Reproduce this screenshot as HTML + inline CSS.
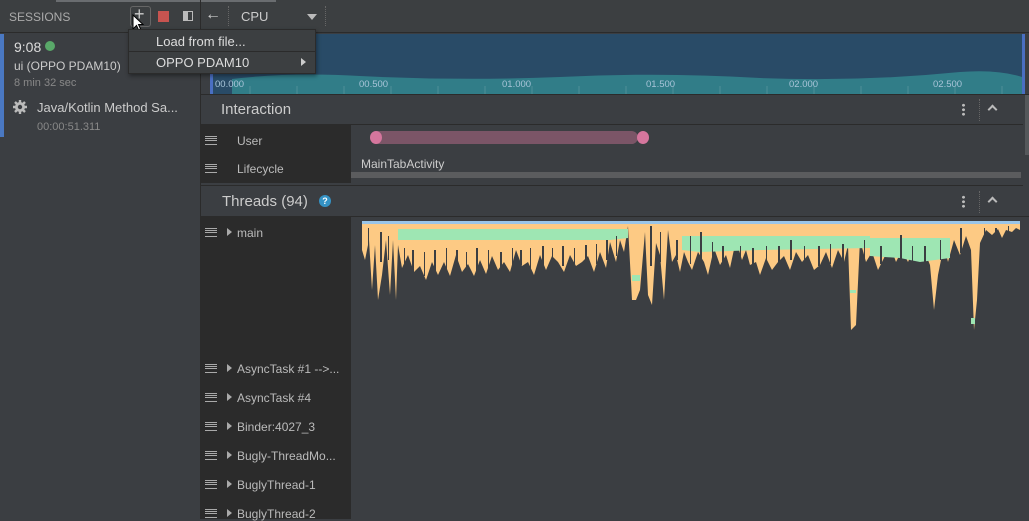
<!DOCTYPE html>
<html><head><meta charset="utf-8"><style>
*{margin:0;padding:0;box-sizing:border-box}
body{width:1029px;height:519px;overflow:hidden;background:#3b3e42;font-family:"Liberation Sans",sans-serif;color:#bbb;position:relative;font-size:12px}
.a{position:absolute}
.ham{position:absolute;width:12px;height:9px;border-top:1px solid #aaa;border-bottom:1px solid #aaa}
.ham:after{content:"";position:absolute;left:0;right:0;top:3px;height:1px;background:#aaa;box-shadow:0 -2px 0 #aaa}
.tri{position:absolute;width:0;height:0;border-left:5px solid #aaa;border-top:4px solid transparent;border-bottom:4px solid transparent}
.lbl{position:absolute;left:237px;font-size:12px;color:#bbb}
.tl{position:absolute;top:79px;font-size:9.5px;color:#a8c4d8}
</style></head><body>
<div class="a" style="left:0;top:0;width:1029px;height:33px;background:#3c3f41;border-bottom:1px solid #2b2b2b"></div>
<div class="a" style="left:56px;top:0;width:220px;height:2px;background:#6a6d70"></div>
<div class="a" style="left:9px;top:10px;font-size:12px;color:#aaa">SESSIONS</div>
<div class="a" style="left:130px;top:6px;width:21px;height:21px;border:1px solid #666;border-radius:3px"></div>
<div class="a" style="left:134px;top:4px;font-size:18px;color:#ccc">+</div>
<div class="a" style="left:158px;top:11px;width:11px;height:11px;background:#c75450"></div>
<div class="a" style="left:183px;top:11px;width:10px;height:10px;border:1px solid #bbb;background:linear-gradient(90deg,#bbb 50%,transparent 50%)"></div>
<svg class="a" style="left:132px;top:14px" width="14" height="20"><path d="M1 1 L1 15 L4.5 11.5 L7 17 L9 16 L6.5 10.5 L11 10.5 Z" fill="#fff" stroke="#000" stroke-width="1"/></svg>
<div class="a" style="left:200px;top:0;width:1px;height:519px;background:#2b2b2b"></div>
<div class="a" style="left:205px;top:6px;font-size:16px;color:#ccc">←</div>
<div class="a" style="left:228px;top:6px;height:20px;border-left:1px dotted #666"></div>
<div class="a" style="left:241px;top:9px;font-size:13px;color:#ccc">CPU</div>
<div class="a" style="left:307px;top:14px;border-top:6px solid #bbb;border-left:5px solid transparent;border-right:5px solid transparent"></div>
<div class="a" style="left:325px;top:6px;height:20px;border-left:1px dotted #666"></div>
<div class="a" style="left:0;top:34px;width:4px;height:103px;background:#4a78c2"></div>
<div class="a" style="left:14px;top:39px;font-size:14px;color:#ddd">9:08</div>
<div class="a" style="left:45px;top:41px;width:10px;height:10px;border-radius:50%;background:#59a869"></div>
<div class="a" style="left:14px;top:59px;color:#ccc">ui (OPPO PDAM10)</div>
<div class="a" style="left:14px;top:77px;font-size:11px;color:#888">8 min 32 sec</div>
<svg class="a" style="left:13px;top:100px" width="14" height="14" viewBox="0 0 14 14"><circle cx="7" cy="7" r="5" fill="#bbb"/><g stroke="#bbb" stroke-width="2.4"><path d="M7 0v14M0 7h14M2 2l10 10M12 2L2 12"/></g><circle cx="7" cy="7" r="2.2" fill="#3b3e42"/></svg>
<div class="a" style="left:37px;top:100px;font-size:13px;color:#ccc">Java/Kotlin Method Sa...</div>
<div class="a" style="left:37px;top:121px;font-size:11px;color:#888">00:00:51.311</div>
<div class="a" style="left:210px;top:34px;width:815px;height:60px;background:#294b67"></div>
<svg class="a" style="left:210px;top:34px" width="815" height="60"><path d="M22 60 L22 45 Q80 38 150 42 Q250 47 350 43 Q450 38 550 44 Q650 48 750 38 Q790 35 815 44 L815 60 Z" fill="#317d88"/>
<g stroke="#4e8e98" stroke-width="1"><path d="M40 52v8M87 52v8M134 52v8M181 52v8M228 52v8M275 52v8M322 52v8M369 52v8M416 52v8M463 52v8M510 52v8M557 52v8M604 52v8M651 52v8M698 52v8M745 52v8M792 52v8"/></g></svg>
<div class="a" style="left:210px;top:34px;width:3px;height:60px;background:#4a6fc2"></div>
<div class="a" style="left:1022px;top:34px;width:3px;height:60px;background:#4a6fc2"></div>
<div class="tl" style="left:215px">00.000</div>
<div class="tl" style="left:359px">00.500</div>
<div class="tl" style="left:502px">01.000</div>
<div class="tl" style="left:646px">01.500</div>
<div class="tl" style="left:789px">02.000</div>
<div class="tl" style="left:933px">02.500</div>
<div class="a" style="left:201px;top:94px;width:828px;height:1px;background:#2b2b2b"></div>
<div class="a" style="left:221px;top:101px;font-size:15px;color:#ccc">Interaction</div>
<div class="a" style="left:962px;top:103px;width:3px;height:13px;background:radial-gradient(circle,#bbb 1.3px,transparent 1.6px) 0 0/3px 4.5px"></div>
<div class="a" style="left:979px;top:99px;height:22px;border-left:1px dotted #666"></div>
<div class="a" style="left:989px;top:106px;width:7px;height:7px;border-left:2px solid #bbb;border-top:2px solid #bbb;transform:rotate(45deg)"></div>
<div class="a" style="left:201px;top:124px;width:822px;height:1px;background:#2b2b2b"></div>
<div class="a" style="left:201px;top:125px;width:150px;height:58px;background:#2b2b2b"></div>
<div class="ham" style="left:205px;top:136px"></div><div class="lbl" style="top:134px">User</div>
<div class="ham" style="left:205px;top:164px"></div><div class="lbl" style="top:162px">Lifecycle</div>
<div class="a" style="left:372px;top:131px;width:266px;height:13px;border-radius:7px;background:#7b5567"></div>
<div class="a" style="left:370px;top:131px;width:12px;height:13px;border-radius:50%;background:#d5769d"></div>
<div class="a" style="left:637px;top:131px;width:12px;height:13px;border-radius:50%;background:#d5769d"></div>
<div class="a" style="left:361px;top:157px;color:#ccc">MainTabActivity</div>
<div class="a" style="left:351px;top:172px;width:670px;height:6px;background:#5b5c5e"></div>
<div class="a" style="left:1025px;top:95px;width:4px;height:60px;background:#55585b"></div>
<div class="a" style="left:201px;top:185px;width:822px;height:1px;background:#2b2b2b"></div>
<div class="a" style="left:222px;top:193px;font-size:15px;color:#ccc">Threads (94)</div>
<div class="a" style="left:319px;top:195px;width:12px;height:12px;border-radius:50%;background:#3592c4;color:#fff;font-size:9px;font-weight:bold;text-align:center;line-height:12px">?</div>
<div class="a" style="left:962px;top:195px;width:3px;height:13px;background:radial-gradient(circle,#bbb 1.3px,transparent 1.6px) 0 0/3px 4.5px"></div>
<div class="a" style="left:979px;top:191px;height:22px;border-left:1px dotted #666"></div>
<div class="a" style="left:989px;top:198px;width:7px;height:7px;border-left:2px solid #bbb;border-top:2px solid #bbb;transform:rotate(45deg)"></div>
<div class="a" style="left:201px;top:216px;width:828px;height:1px;background:#2b2b2b"></div>
<div class="a" style="left:201px;top:217px;width:150px;height:302px;background:#2b2b2b"></div>
<div class="ham" style="left:205px;top:228px"></div><div class="tri" style="left:227px;top:228px"></div><div class="lbl" style="top:226px">main</div>
<div class="ham" style="left:205px;top:364px"></div><div class="tri" style="left:227px;top:364px"></div><div class="lbl" style="top:362px">AsyncTask #1 --&gt;...</div>
<div class="ham" style="left:205px;top:393px"></div><div class="tri" style="left:227px;top:393px"></div><div class="lbl" style="top:391px">AsyncTask #4</div>
<div class="ham" style="left:205px;top:422px"></div><div class="tri" style="left:227px;top:422px"></div><div class="lbl" style="top:420px">Binder:4027_3</div>
<div class="ham" style="left:205px;top:451px"></div><div class="tri" style="left:227px;top:451px"></div><div class="lbl" style="top:449px">Bugly-ThreadMo...</div>
<div class="ham" style="left:205px;top:480px"></div><div class="tri" style="left:227px;top:480px"></div><div class="lbl" style="top:478px">BuglyThread-1</div>
<div class="ham" style="left:205px;top:509px"></div><div class="tri" style="left:227px;top:509px"></div><div class="lbl" style="top:507px">BuglyThread-2</div>
<svg class="a" style="left:0;top:0" width="1029" height="519">
<rect x="362" y="221" width="658" height="3" fill="#9ac5e8"/>
<polygon fill="#fdca84" points="362,224 1020,224 1020,230 1016,228 1012,232 1006,230 1002,238 998,229 992,235 986,230 980,243 977,300 974,330 971,250 966,236 960,255 954,240 948,262 944,245 938,275 934,310 930,265 926,255 920,262 914,248 908,262 902,250 896,262 890,245 884,258 878,270 872,252 866,262 860,240 856,325 851,330 848,245 844,262 838,250 832,268 826,252 820,265 814,270 808,255 802,262 796,252 790,270 784,256 778,262 772,270 766,258 760,275 756,262 750,265 746,250 742,260 736,240 730,268 726,255 720,265 714,248 708,275 704,262 698,252 692,270 688,262 684,252 680,272 676,255 672,262 668,230 664,300 660,255 656,243 652,305 648,295 645,232 640,290 636,300 632,300 628,226 624,252 620,240 616,262 610,242 606,268 600,252 594,272 588,256 582,262 576,266 570,255 564,272 558,262 552,256 546,270 540,255 534,275 528,262 522,266 516,250 510,272 504,262 498,270 492,256 486,274 480,260 474,276 468,264 462,272 456,255 450,276 444,262 438,275 432,262 426,280 420,266 414,272 408,255 402,268 398,245 396,300 393,240 390,295 386,240 382,275 378,300 375,245 372,290 369,240 365,260 362,250"/>
<polygon fill="#9ee6b3" points="398,229 628,229 628,238 610,240 600,240 398,240"/>
<polygon fill="#9ee6b3" points="682,236 870,236 870,248 760,250 700,252 682,250"/>
<polygon fill="#9ee6b3" points="870,238 950,238 950,258 920,262 900,258 870,256"/>
<rect x="632" y="275" width="8" height="6" fill="#9ee6b3"/>
<rect x="850" y="290" width="6" height="3" fill="#9ee6b3"/>
<rect x="971" y="318" width="4" height="6" fill="#9ee6b3"/>
<g fill="#3b3e42">
<rect x="368" y="228" width="1" height="30"/><rect x="380" y="232" width="2" height="30"/><rect x="388" y="236" width="1" height="24"/>
<rect x="404" y="248" width="1" height="25"/><rect x="412" y="250" width="2" height="22"/><rect x="424" y="252" width="1" height="24"/><rect x="434" y="250" width="2" height="26"/><rect x="446" y="248" width="1" height="24"/><rect x="456" y="250" width="2" height="20"/><rect x="466" y="252" width="1" height="20"/><rect x="476" y="248" width="2" height="26"/><rect x="488" y="250" width="1" height="22"/><rect x="500" y="252" width="2" height="20"/><rect x="512" y="248" width="1" height="20"/><rect x="520" y="250" width="2" height="15"/><rect x="530" y="248" width="1" height="22"/><rect x="542" y="246" width="2" height="20"/><rect x="552" y="248" width="1" height="22"/><rect x="562" y="246" width="2" height="20"/><rect x="574" y="248" width="1" height="20"/><rect x="585" y="245" width="2" height="20"/><rect x="596" y="244" width="1" height="20"/><rect x="606" y="240" width="2" height="20"/><rect x="616" y="236" width="1" height="20"/>
<rect x="650" y="226" width="2" height="40"/><rect x="660" y="232" width="1" height="30"/><rect x="676" y="240" width="2" height="20"/><rect x="690" y="236" width="1" height="28"/><rect x="700" y="232" width="2" height="30"/><rect x="712" y="242" width="1" height="24"/><rect x="722" y="246" width="2" height="20"/><rect x="740" y="246" width="1" height="18"/><rect x="752" y="248" width="2" height="18"/><rect x="766" y="246" width="1" height="18"/><rect x="778" y="246" width="2" height="18"/><rect x="790" y="240" width="2" height="20"/><rect x="804" y="246" width="1" height="18"/><rect x="818" y="246" width="2" height="20"/><rect x="830" y="244" width="1" height="20"/><rect x="842" y="244" width="2" height="18"/><rect x="864" y="240" width="1" height="20"/><rect x="880" y="246" width="2" height="18"/><rect x="900" y="235" width="2" height="25"/><rect x="912" y="246" width="1" height="16"/><rect x="924" y="246" width="2" height="16"/><rect x="940" y="240" width="1" height="20"/><rect x="960" y="228" width="2" height="25"/><rect x="984" y="228" width="1" height="12"/><rect x="995" y="228" width="2" height="10"/><rect x="1008" y="226" width="1" height="8"/></g>
</svg>
<div class="a" style="left:128px;top:29px;width:188px;height:45px;background:#3c3f41;border:1px solid #2b2b2b;box-shadow:1px 2px 4px rgba(0,0,0,.4)"></div>
<div class="a" style="left:129px;top:51px;width:186px;height:1px;background:#2b2b2b"></div>
<div class="a" style="left:156px;top:34px;font-size:13px;color:#ddd">Load from file...</div>
<div class="a" style="left:156px;top:55px;font-size:13px;color:#ddd">OPPO PDAM10</div>
<div class="tri" style="left:301px;top:58px;border-left-color:#ccc"></div>
</body></html>
